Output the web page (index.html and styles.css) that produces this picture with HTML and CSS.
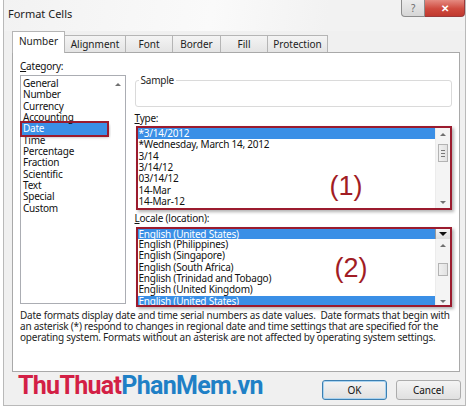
FILE: index.html
```html
<!DOCTYPE html>
<html lang="en">

<head>
    <meta charset="UTF-8">
    <title>Format Cells</title>
    <link rel="stylesheet" href="styles.css">
</head>

<body>
    <div class="window">
        <div class="titlebar">
            <span class="title">Format Cells</span>
            <div class="caption-btns">
                <div class="cap-btn help">?</div>
                <div class="cap-btn close">✕</div>
            </div>
        </div>

        <div class="tabs">
            <div class="tab active">Number</div>
            <div class="tab">Alignment</div>
            <div class="tab">Font</div>
            <div class="tab">Border</div>
            <div class="tab">Fill</div>
            <div class="tab">Protection</div>
        </div>

        <div class="panel">
            <div class="panel-top">
                <div class="col-left">
                    <div class="label"><u>C</u>ategory:</div>
                    <div class="listbox category">
                        <div class="items">
                            <div class="item">General</div>
                            <div class="item">Number</div>
                            <div class="item">Currency</div>
                            <div class="item">Accounting</div>
                            <div class="item selected marked">Date</div>
                            <div class="item">Time</div>
                            <div class="item">Percentage</div>
                            <div class="item">Fraction</div>
                            <div class="item">Scientific</div>
                            <div class="item">Text</div>
                            <div class="item">Special</div>
                            <div class="item">Custom</div>
                        </div>
                        <div class="scrollbar plain">
                            <span class="arrow up"></span>
                        </div>
                    </div>
                </div>

                <div class="col-right">
                    <fieldset class="sample">
                        <legend>Sample</legend>
                    </fieldset>

                    <div class="label type-label"><u>T</u>ype:</div>
                    <div class="redbox type-list">
                        <div class="items">
                            <div class="item selected">*3/14/2012</div>
                            <div class="item">*Wednesday, March 14, 2012</div>
                            <div class="item">3/14</div>
                            <div class="item">3/14/12</div>
                            <div class="item">03/14/12</div>
                            <div class="item">14-Mar</div>
                            <div class="item">14-Mar-12</div>
                        </div>
                        <div class="scrollbar">
                            <span class="arrow up"></span>
                            <span class="thumb type-thumb"><span class="grip"></span></span>
                            <span class="arrow down"></span>
                        </div>
                        <span class="callout callout-1">(1)</span>
                    </div>

                    <div class="label locale-label"><u>L</u>ocale (location):</div>
                    <div class="redbox locale">
                        <div class="combo">
                            <div class="combo-value">English (United States)</div>
                            <div class="combo-btn"><span class="arrow down dark"></span></div>
                        </div>
                        <div class="dropdown">
                            <div class="items">
                                <div class="item">English (Philippines)</div>
                                <div class="item">English (Singapore)</div>
                                <div class="item">English (South Africa)</div>
                                <div class="item">English (Trinidad and Tobago)</div>
                                <div class="item">English (United Kingdom)</div>
                                <div class="item selected">English (United States)</div>
                            </div>
                            <div class="scrollbar">
                                <span class="arrow up"></span>
                                <span class="thumb locale-thumb"></span>
                                <span class="arrow down"></span>
                            </div>
                        </div>
                        <span class="callout callout-2">(2)</span>
                    </div>
                </div>
            </div>

            <p class="desc">Date formats display date and time serial numbers as date values.&nbsp; Date formats that begin with
                an asterisk (*) respond to changes in regional date and time settings that are specified for the
                operating system. Formats without an asterisk are not affected by operating system settings.</p>
        </div>

        <div class="footer">
            <div class="watermark"><span class="wm-red">ThuThuat</span><span class="wm-blue">PhanMem.vn</span></div>
            <div class="buttons">
                <button class="btn ok">OK</button>
                <button class="btn">Cancel</button>
            </div>
        </div>
    </div>
</body>

</html>
```

FILE: styles.css
```css
:root {
    --win-bg: #f0f0f0;
    --frame: #b9b9b9;
    --panel-border: #a9a9a9;
    --select: #3a8fe6;
    --mark: #9b1b2e;
    --text: #1a1a1a;
}

body {
    margin: 0;
    background: #fff;
    font-family: 'Noto Sans', 'Open Sans', sans-serif;
    font-size: 10px;
    letter-spacing: -0.22px;
    color: var(--text);
}

.window {
    margin-left: 3px;
    width: 461px;
    height: 405px;
    background: var(--win-bg);
    border: 1px solid var(--frame);
    border-top: none;
    display: flex;
    flex-direction: column;
}

.titlebar {
    height: 31px;
    display: flex;
    justify-content: space-between;
    align-items: flex-start;
    background: linear-gradient(100deg, #f2f2f2 0%, #fafafa 45%, #f2f2f2 70%);
}

.title {
    margin: 6px 0 0 4px;
    font-size: 11px;
    letter-spacing: 0;
    color: #222;
}

.caption-btns {
    display: flex;
}

.cap-btn {
    height: 16px;
    display: flex;
    justify-content: center;
    align-items: center;
    border: 1px solid #8c8c8c;
    border-top: none;
}

.help {
    width: 22px;
    background: linear-gradient(#ececec, #d6d6d6);
    color: #6a6a6a;
    font-size: 10px;
    border-radius: 0 0 0 4px;
}

.close {
    width: 39px;
    border-left: none;
    border-color: #9b3a3a;
    background: linear-gradient(#e58a80, #cf4a3e 55%, #c0392f);
    color: #fff;
    font-size: 10px;
    font-weight: bold;
    border-radius: 0 0 4px 0;
}

.tabs {
    display: flex;
    align-items: flex-end;
    height: 21px;
    margin-left: 8px;
    position: relative;
    z-index: 1;
}

.tab {
    height: 17px;
    line-height: 17px;
    box-sizing: border-box;
    border: 1px solid #b5b5b5;
    border-left: none;
    border-bottom: none;
    background: linear-gradient(#f4f4f4, #e4e4e4);
    text-align: center;
    font-size: 10px;
    letter-spacing: 0;
    color: #222;
}

.tab.active {
    height: 22px;
    line-height: 19px;
    margin-bottom: -1px;
    background: #fff;
    border-left: 1px solid #b5b5b5;
    width: 53px;
}

.tab:nth-child(2) { width: 61px; }
.tab:nth-child(3) { width: 47px; }
.tab:nth-child(4) { width: 48px; }
.tab:nth-child(5) { width: 47px; }
.tab:nth-child(6) { width: 60px; }

.panel {
    margin-left: 8px;
    width: 448px;
    height: 320px;
    box-sizing: border-box;
    background: #fff;
    border: 1px solid var(--panel-border);
    padding: 7px 7px 0 7px;
}

.panel-top {
    display: flex;
    gap: 9px;
}

.col-left {
    width: 106px;
}

.col-right {
    width: 319px;
    display: flex;
    flex-direction: column;
}

.label {
    height: 12px;
    line-height: 12px;
    color: #111;
}

.items {
    flex: 1;
    min-width: 0;
}

.item {
    height: 11.35px;
    line-height: 11.35px;
    padding-left: 1px;
    white-space: nowrap;
    color: #111;
}

.item.selected {
    background: var(--select);
    color: #fff;
}

.listbox {
    margin-top: 3px;
    height: 229px;
    box-sizing: border-box;
    border: 1px solid #abadb3;
    display: flex;
    padding-top: 2px;
}

.category .items {
    padding-left: 1px;
}

.item.marked {
    width: 84px;
    outline: 2px solid var(--mark);
    box-shadow: 2px 2px 3px rgba(0, 0, 0, 0.35);
}

.scrollbar {
    width: 14px;
    position: relative;
    background: #f4f4f4;
    border-left: 1px solid #ececec;
}

.scrollbar.plain {
    background: #fff;
    border-left: none;
}

.arrow {
    position: absolute;
    left: 4px;
    width: 0;
    height: 0;
    border-left: 3px solid transparent;
    border-right: 3px solid transparent;
}

.arrow.up {
    top: 5px;
    border-bottom: 3px solid #707070;
}

.arrow.down {
    bottom: 4px;
    border-top: 3px solid #707070;
}

.arrow.dark {
    left: 3px;
    bottom: 3px;
    border-left-width: 4px;
    border-right-width: 4px;
    border-top: 4px solid #111;
}

.thumb {
    position: absolute;
    left: 2px;
    width: 10px;
    box-sizing: border-box;
    border: 1px solid #b3b3b3;
    background: linear-gradient(90deg, #f0f0f0, #e2e2e2);
}

.type-thumb {
    top: 16px;
    height: 18px;
}

.locale-thumb {
    top: 24px;
    height: 13px;
}

.grip {
    position: absolute;
    left: 2px;
    top: 5px;
    width: 4px;
    height: 5px;
    border-top: 1px solid #777;
    border-bottom: 1px solid #777;
}

.grip::after {
    content: "";
    position: absolute;
    left: 0;
    top: 2px;
    width: 4px;
    border-top: 1px solid #777;
}

.sample {
    margin: 14px 0 0 0;
    padding: 0;
    height: 33px;
    box-sizing: border-box;
    border: 1px solid #dadada;
    border-radius: 3px;
}

.sample legend {
    margin-left: 3px;
    padding: 0 2px;
    line-height: 12px;
    color: #222;
}

.type-label {
    margin-top: 5px;
}

.locale-label {
    margin-top: 2px;
}

.redbox {
    position: relative;
    box-sizing: border-box;
    border: 2px solid var(--mark);
    box-shadow: 2px 2px 3px rgba(0, 0, 0, 0.3);
    margin-left: 1px;
}

.type-list {
    margin-top: 2px;
    height: 84px;
    display: flex;
}

.locale {
    margin-top: 3px;
    height: 80px;
    display: flex;
    flex-direction: column;
    overflow: hidden;
}

.combo {
    display: flex;
    height: 11px;
}

.combo-value {
    flex: 1;
    background: var(--select);
    color: #fff;
    line-height: 10px;
    padding-left: 1px;
    overflow: hidden;
}

.combo-btn {
    width: 14px;
    position: relative;
    background: linear-gradient(#f6f6f6, #dedede);
    border-left: 1px solid #9a9a9a;
}

.dropdown {
    flex: 1;
    display: flex;
}

.callout {
    position: absolute;
    font-family: 'Liberation Sans', Arial, sans-serif;
    font-size: 27px;
    letter-spacing: 0;
    color: #a11c24;
    line-height: 27px;
}

.callout-1 {
    left: 192px;
    top: 45px;
}

.callout-2 {
    left: 197px;
    top: 26px;
}

.desc {
    margin: 3px 0 0 0;
    line-height: 11px;
    color: #1e1e1e;
}

.footer {
    flex: 1;
    display: flex;
    justify-content: space-between;
    align-items: flex-start;
    padding: 0 4px 0 14px;
}

.watermark {
    margin-top: -1px;
    font-family: Roboto, 'Liberation Sans', sans-serif;
    font-weight: bold;
    font-size: 25px;
    letter-spacing: -0.7px;
}

.wm-red {
    color: #d31f45;
}

.wm-blue {
    color: #1f80c6;
}

.buttons {
    display: flex;
    gap: 9px;
    margin-top: 8px;
}

.btn {
    width: 65px;
    height: 20px;
    padding: 0;
    font-family: 'Noto Sans', 'Open Sans', sans-serif;
    font-size: 10px;
    letter-spacing: 0;
    color: #111;
    background: linear-gradient(#f4f4f4, #e0e0e0);
    border: 1px solid #acacac;
    border-radius: 3px;
}

.btn.ok {
    border-color: #3c7fb1;
    box-shadow: inset 0 0 0 1px #a9d3f0;
}
```
